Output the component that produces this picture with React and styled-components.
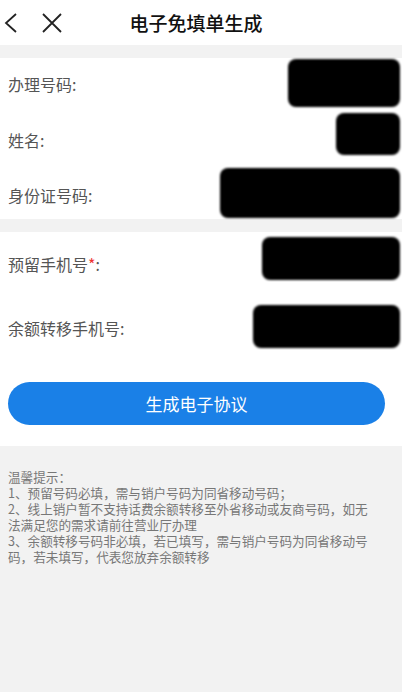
import React from 'react';
import styled, { createGlobalStyle } from 'styled-components';

const GlobalStyle = createGlobalStyle`
  html, body {
    margin: 0;
    padding: 0;
    background: #f2f2f2;
    font-family: "Noto Sans CJK SC", "Noto Sans", sans-serif;
  }
`;

const Page = styled.div`
  width: 402px;
  min-height: 692px;
  background: #f2f2f2;
  display: flex;
  flex-direction: column;
`;

const Header = styled.div`
  height: 45px;
  background: #fff;
  display: flex;
  align-items: center;
  position: relative;
`;

const NavIcons = styled.div`
  display: flex;
  align-items: center;
  gap: 22px;
  padding-left: 3px;
  z-index: 1;
`;

const Title = styled.div`
  position: absolute;
  left: 0;
  right: 10px;
  text-align: center;
  font-size: 19px;
  font-weight: 500;
  color: #111;
`;

const Section = styled.div`
  background: #fff;
  margin-top: 13px;
  display: flex;
  flex-direction: column;
`;

const Row = styled.div`
  height: ${p => p.$h}px;
  display: flex;
  align-items: center;
  justify-content: space-between;
  padding-left: 8px;
`;

const Label = styled.div`
  font-size: 16px;
  color: #555;
`;

const Star = styled.span`
  color: #e33;
`;

const Redaction = styled.div`
  width: ${p => p.$w}px;
  height: ${p => p.$h}px;
  background: #000;
  border-radius: 8px;
  filter: blur(1.2px);
  margin-right: 2px;
  transform: translateY(${p => p.$dy || 0}px);
`;

const ButtonWrap = styled.div`
  padding: 23px 17px 21px 8px;
`;

const Button = styled.button`
  width: 100%;
  height: 43px;
  border: none;
  border-radius: 22px;
  background: #1a80e7;
  color: #fff;
  font-family: inherit;
  font-size: 17px;
`;

const Notes = styled.div`
  padding: 23px 25px 0 8px;
  font-size: 12.6px;
  line-height: 16px;
  color: #777;
`;

const Back = () => (
  <svg width="16" height="22" viewBox="0 0 16 22">
    <path d="M13 2 L3 11 L13 20" fill="none" stroke="#222" strokeWidth="1.8" />
  </svg>
);

const Close = () => (
  <svg width="22" height="22" viewBox="0 0 22 22">
    <path d="M2 2 L20 20 M20 2 L2 20" fill="none" stroke="#222" strokeWidth="1.8" />
  </svg>
);

export default function App() {
  return (
    <Page>
      <GlobalStyle />
      <Header>
        <NavIcons>
          <Back />
          <Close />
        </NavIcons>
        <Title>电子免填单生成</Title>
      </Header>
      <Section>
        <Row $h={51}>
          <Label>办理号码:</Label>
          <Redaction $w={112} $h={48} $dy={-1} />
        </Row>
        <Row $h={62}>
          <Label>姓名:</Label>
          <Redaction $w={64} $h={42} $dy={-6} />
        </Row>
        <Row $h={48}>
          <Label>身份证号码:</Label>
          <Redaction $w={180} $h={50} $dy={-2} />
        </Row>
      </Section>
      <Section>
        <Row $h={64}>
          <Label>预留手机号<Star>*</Star>:</Label>
          <Redaction $w={138} $h={43} $dy={-6} />
        </Row>
        <Row $h={63}>
          <Label>余额转移手机号:</Label>
          <Redaction $w={147} $h={43} $dy={-1} />
        </Row>
        <ButtonWrap>
          <Button>生成电子协议</Button>
        </ButtonWrap>
      </Section>
      <Notes>
        温馨提示：<br />
        1、预留号码必填，需与销户号码为同省移动号码；<br />
        2、线上销户暂不支持话费余额转移至外省移动或友商号码，如无法满足您的需求请前往营业厅办理<br />
        3、余额转移号码非必填，若已填写，需与销户号码为同省移动号码，若未填写，代表您放弃余额转移
      </Notes>
    </Page>
  );
}
